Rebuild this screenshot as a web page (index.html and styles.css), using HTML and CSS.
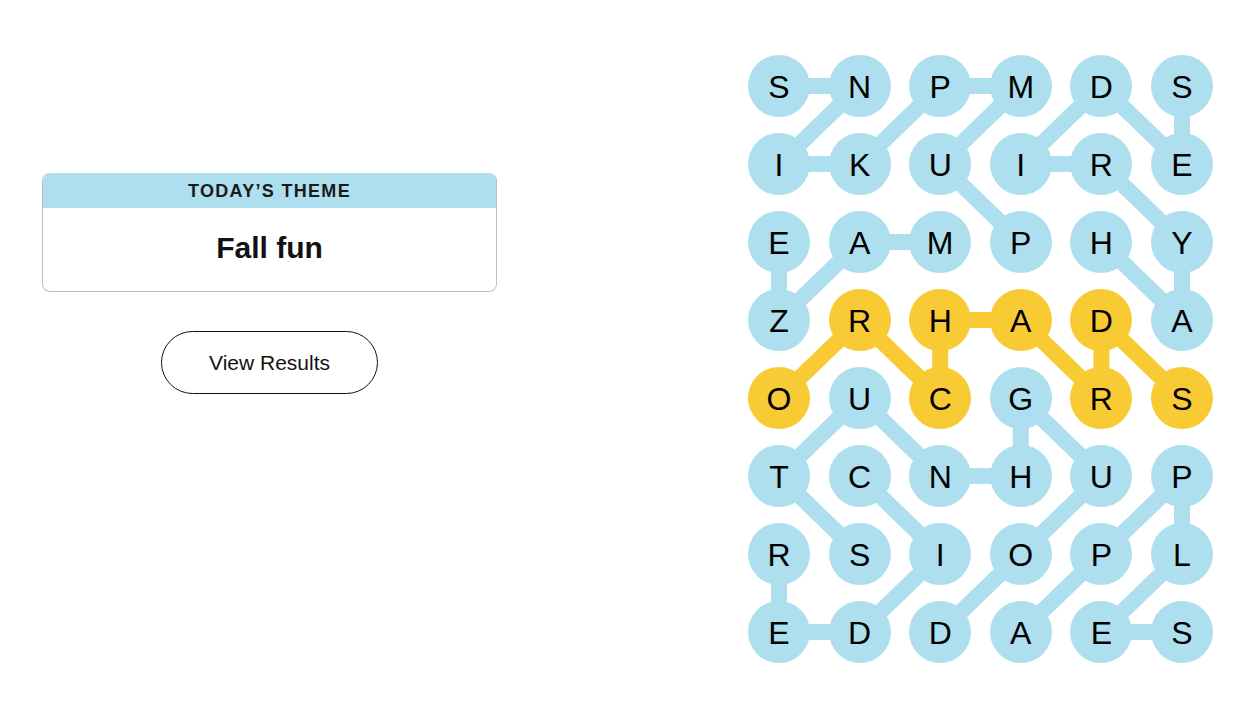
FILE: index.html
```html
<!DOCTYPE html>
<html lang="en">
<head>
<meta charset="utf-8">
<title>Strands</title>
<link rel="stylesheet" href="styles.css">
</head>
<body>
<main class="page">
  <section class="side">
    <div class="theme-card">
      <div class="theme-head">TODAY’S THEME</div>
      <div class="theme-body">Fall fun</div>
    </div>
    <button class="results-btn" type="button">View Results</button>
  </section>

  <section class="board">
    <svg class="links" viewBox="0 0 465 608" width="465" height="608" aria-hidden="true">
      <g class="found">
        <!-- PUMPKINS -->
        <polyline points="31,31 111.6,31 31,109 111.6,109 192.2,31 272.8,31 192.2,109 272.8,187"/>
        <!-- HAYRIDES -->
        <polyline points="353.4,187 434,265 434,187 353.4,109 272.8,109 353.4,31 434,109 434,31"/>
        <!-- MAZE -->
        <polyline points="192.2,187 111.6,187 31,265 31,187"/>
        <!-- DOUGHNUTS -->
        <polyline points="192.2,577 272.8,499 353.4,421 272.8,343 272.8,421 192.2,421 111.6,343 31,421 111.6,499"/>
        <!-- CIDER -->
        <polyline points="111.6,421 192.2,499 111.6,577 31,577 31,499"/>
        <!-- APPLES -->
        <polyline points="272.8,577 353.4,499 434,421 434,499 353.4,577 434,577"/>
      </g>
      <g class="span">
        <!-- ORCHARDS -->
        <polyline points="31,343 111.6,265 192.2,343 192.2,265 272.8,265 353.4,343 353.4,265 434,343"/>
      </g>
    </svg>
    <div class="grid">
      <div class="cell">S</div><div class="cell">N</div><div class="cell">P</div><div class="cell">M</div><div class="cell">D</div><div class="cell">S</div>
      <div class="cell">I</div><div class="cell">K</div><div class="cell">U</div><div class="cell">I</div><div class="cell">R</div><div class="cell">E</div>
      <div class="cell">E</div><div class="cell">A</div><div class="cell">M</div><div class="cell">P</div><div class="cell">H</div><div class="cell">Y</div>
      <div class="cell">Z</div><div class="cell gold">R</div><div class="cell gold">H</div><div class="cell gold">A</div><div class="cell gold">D</div><div class="cell">A</div>
      <div class="cell gold">O</div><div class="cell">U</div><div class="cell gold">C</div><div class="cell">G</div><div class="cell gold">R</div><div class="cell gold">S</div>
      <div class="cell">T</div><div class="cell">C</div><div class="cell">N</div><div class="cell">H</div><div class="cell">U</div><div class="cell">P</div>
      <div class="cell">R</div><div class="cell">S</div><div class="cell">I</div><div class="cell">O</div><div class="cell">P</div><div class="cell">L</div>
      <div class="cell">E</div><div class="cell">D</div><div class="cell">D</div><div class="cell">A</div><div class="cell">E</div><div class="cell">S</div>
    </div>
  </section>
</main>
</body>
</html>
```

FILE: styles.css
```css
* {
  box-sizing: border-box;
}

html, body {
  margin: 0;
  padding: 0;
  background: #ffffff;
}

body {
  font-family: "Liberation Sans", Arial, sans-serif;
  color: #121212;
  width: 1250px;
  height: 704px;
  overflow: hidden;
}

.page {
  display: flex;
  align-items: flex-start;
  gap: 251px;
  padding: 55px 0 0 42px;
}

.side {
  width: 455px;
  padding-top: 118px;
  display: flex;
  flex-direction: column;
  align-items: center;
}

.theme-card {
  width: 455px;
  border: 1px solid #bfbfbf;
  border-top: none;
  border-radius: 8px;
  overflow: hidden;
}

.theme-head {
  height: 35px;
  margin: 0 -1px;
  background: #aedfee;
  display: flex;
  align-items: center;
  justify-content: center;
  font-size: 18px;
  font-weight: 700;
  letter-spacing: 1.3px;
  color: #1a1a1a;
  padding-top: 2px;
}

.theme-body {
  height: 83px;
  display: flex;
  align-items: center;
  justify-content: center;
  font-size: 30px;
  font-weight: 700;
  color: #121212;
  padding-bottom: 3px;
}

.results-btn {
  margin-top: 39px;
  width: 217px;
  height: 63px;
  border: 1.5px solid #121212;
  border-radius: 32px;
  background: #ffffff;
  font-family: "Liberation Sans", Arial, sans-serif;
  font-size: 21px;
  color: #121212;
  padding: 0;
  cursor: pointer;
}

.board {
  position: relative;
  width: 465px;
  height: 608px;
}

.links {
  position: absolute;
  left: 0;
  top: 0;
  z-index: 0;
}

.links polyline {
  fill: none;
  stroke-width: 16;
  stroke-linejoin: round;
}

.found polyline {
  stroke: #aedfee;
}

.span polyline {
  stroke: #f8ca33;
}

.grid {
  position: relative;
  z-index: 1;
  display: grid;
  grid-template-columns: repeat(6, 62px);
  grid-auto-rows: 62px;
  column-gap: 18.6px;
  row-gap: 16px;
}

.cell {
  width: 62px;
  height: 62px;
  border-radius: 50%;
  background: #aedfee;
  display: flex;
  align-items: center;
  justify-content: center;
  font-size: 32px;
  color: #000000;
  line-height: 1;
  padding-top: 1px;
}

.cell.gold {
  background: #f8ca33;
}
```
